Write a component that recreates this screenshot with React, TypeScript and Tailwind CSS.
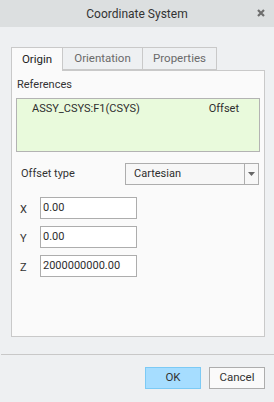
import React from "react";

export default function App() {
  const font = { fontFamily: 'Roboto, "Noto Sans", sans-serif' };
  return (
    <div
      className="w-[274px] h-[402px] bg-[#eef0f2] flex flex-col text-[11px] text-[#2e2e2e] overflow-hidden"
      style={font}
    >
      {/* Title bar */}
      <div className="h-[27px] bg-[#dcdfe0] flex items-center relative shrink-0">
        <div className="flex-1 text-center text-[12px] text-[#333] leading-none">Coordinate System</div>
        <svg className="absolute left-[257px] top-[9px]" width="8" height="8" viewBox="0 0 8 8">
          <path d="M1 1 L7 7 M7 1 L1 7" stroke="#6e6e6e" strokeWidth="2.2" />
        </svg>
      </div>

      {/* Tabs */}
      <div className="flex ml-[11px] mt-[20px] h-[23px] relative z-10 text-[11.5px]">
        <div className="w-[52px] h-[24px] bg-[#fafafa] border-t border-l border-r border-[#c9c9c9] flex items-center justify-center text-[#222]">
          Origin
        </div>
        <div className="w-[80px] h-[23px] border-t border-r border-b border-[#c9c9c9] flex items-center justify-center text-[#6a6a6a]">
          Orientation
        </div>
        <div className="w-[74px] h-[23px] border-t border-r border-b border-[#c9c9c9] flex items-center justify-center text-[#6a6a6a]">
          Properties
        </div>
      </div>

      {/* Panel */}
      <div className="ml-[11px] mr-[9px] h-[267px] bg-[#fafafa] border border-[#c9c9c9] flex flex-col">
        <div className="pl-[5px] pt-[6px] leading-[16px] text-[#333]">References</div>
        <div className="mx-[4px] mt-[5px] h-[54px] bg-[#e9fadc] border border-[#b3b3b3] flex justify-between pl-[15px] pr-[20px] pt-[2px] leading-[16px] text-[#2e2e2e]">
          <span>ASSY_CSYS:F1(CSYS)</span>
          <span>Offset</span>
        </div>

        <div className="flex items-center mt-[11px] h-[22px]">
          <div className="pl-[9px] w-[113px] text-[#333]">Offset type</div>
          <div className="w-[134px] h-[22px] border border-[#adadad] bg-[#f7f7f7] flex">
            <div className="flex-1 pl-[8px] flex items-center text-[#2e2e2e]">Cartesian</div>
            <div className="w-[14px] border-l border-[#adadad] flex items-center justify-center">
              <svg width="7" height="4" viewBox="0 0 7 4">
                <path d="M0 0 H7 L3.5 4 Z" fill="#666" />
              </svg>
            </div>
          </div>
        </div>

        <div className="flex flex-col gap-[7px] mt-[12px]">
          {[
            ["X", "0.00"],
            ["Y", "0.00"],
            ["Z", "2000000000.00"],
          ].map(([l, v]) => (
            <div key={l} className="flex items-center h-[22px]">
              <div className="w-[28px] pl-[8px] text-[#333] pt-[4px]">{l}</div>
              <div className="w-[97px] h-[22px] border border-[#adadad] bg-white flex items-center pl-[2px] text-[#2e2e2e]">
                {v}
              </div>
            </div>
          ))}
        </div>
      </div>

      {/* Separator */}
      <div className="mt-[17px] ml-[1px] h-px bg-[#c8c8c8]" />

      {/* Buttons */}
      <div className="flex justify-end gap-[8px] mr-[9px] mt-[12px] text-[11.5px]">
        <div className="w-[56px] h-[22px] bg-[#a6ddff] border border-[#7ccaf5] flex items-center justify-center text-[#333]">
          OK
        </div>
        <div className="w-[56px] h-[22px] bg-[#fafafa] border border-[#adadad] flex items-center justify-center text-[#333]">
          Cancel
        </div>
      </div>
    </div>
  );
}
